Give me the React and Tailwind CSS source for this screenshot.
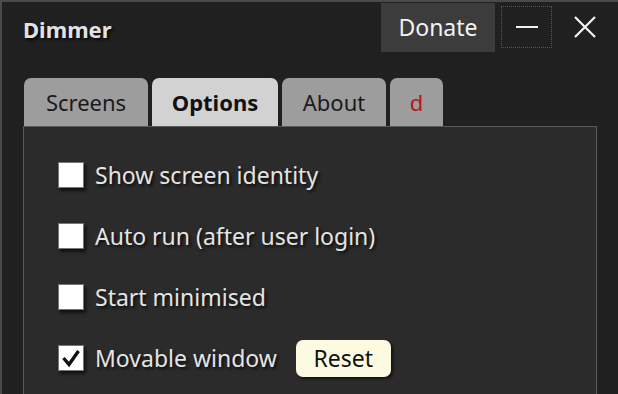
import React from 'react';

const font = { fontFamily: '"Noto Sans", "Open Sans", sans-serif' };

const tabs = [
  { label: 'Screens', w: 'w-[124px]', active: false },
  { label: 'Options', w: 'w-[126px]', active: true },
  { label: 'About', w: 'w-[104px]', active: false },
  { label: 'd', w: 'w-[53px]', active: false, red: true },
];

const options = [
  { label: 'Show screen identity', checked: false },
  { label: 'Auto run (after user login)', checked: false },
  { label: 'Start minimised', checked: false },
  { label: 'Movable window', checked: true, reset: true },
];

const CheckBox = ({ checked }) => (
  <span className="flex h-[26px] w-[26px] shrink-0 items-center justify-center border border-[#777] bg-white shadow-[2px_3px_3px_rgba(0,0,0,0.6)]">
    {checked && (
      <svg width="20" height="20" viewBox="0 0 20 20">
        <path d="M2.5 10 L8 16.5 L17.5 3" fill="none" stroke="#111" strokeWidth="3.4" />
      </svg>
    )}
  </span>
);

export default function App() {
  return (
    <div
      className="flex h-[394px] w-[618px] flex-col overflow-hidden border-l-2 border-t-2 border-[#4a4a4a] bg-[#202020]"
      style={font}
    >
      {/* title bar */}
      <div className="flex h-[50px] items-start">
        <div className="pl-[21px] pt-[13px] text-[22px] font-bold leading-[28px] text-[#e2e2e2] [text-shadow:2px_2px_3px_rgba(0,0,0,0.8)]">
          Dimmer
        </div>
        <div className="ml-auto flex items-start">
          <button className="mt-[1px] flex h-[49px] w-[114px] items-center justify-center bg-[#3c3c3c] text-[23px] text-[#f2f2f2]">
            Donate
          </button>
          <button className="ml-[6px] mt-[4px] flex h-[42px] w-[51px] items-center justify-center border border-dotted border-[#555]">
            <span className="block h-[2px] w-[22px] bg-[#f0f0f0]" />
          </button>
          <button className="ml-[16px] mr-[16px] mt-[4px] flex h-[42px] w-[34px] items-center justify-center">
            <svg width="22" height="22" viewBox="0 0 22 22">
              <path d="M1 1 L21 21 M21 1 L1 21" stroke="#f4f4f4" strokeWidth="2.2" />
            </svg>
          </button>
        </div>
      </div>

      {/* tabs */}
      <div className="mt-[26px] flex gap-[4px] pl-[22px]">
        {tabs.map((t) => (
          <div
            key={t.label}
            className={`flex h-[48px] ${t.w} items-center justify-center rounded-t-[7px] text-[22px] ${
              t.active ? 'bg-[#d2d2d2] font-bold text-[#111]' : 'bg-[#9d9d9d] text-[#1a1a1a]'
            } ${t.red ? 'text-[#b01818]' : ''}`}
          >
            {t.label}
          </div>
        ))}
      </div>

      {/* panel */}
      <div className="ml-[21px] mr-[21px] flex flex-1 flex-col border border-[#5a5a5a] bg-[#2b2b2b] pl-[34px] pt-[35px]">
        {options.map((o) => (
          <div key={o.label} className="mb-[35px] flex h-[26px] items-center">
            <CheckBox checked={o.checked} />
            <span className="ml-[11px] text-[23px] text-[#e4e4e4] [text-shadow:2px_2px_3px_rgba(0,0,0,0.7)]">
              {o.label}
            </span>
            {o.reset && (
              <button className="ml-[19px] flex h-[37px] w-[95px] items-center justify-center rounded-[7px] bg-[#fdfae2] text-[23px] text-[#111] shadow-[2px_2px_3px_rgba(0,0,0,0.6)]">
                Reset
              </button>
            )}
          </div>
        ))}
      </div>
    </div>
  );
}
